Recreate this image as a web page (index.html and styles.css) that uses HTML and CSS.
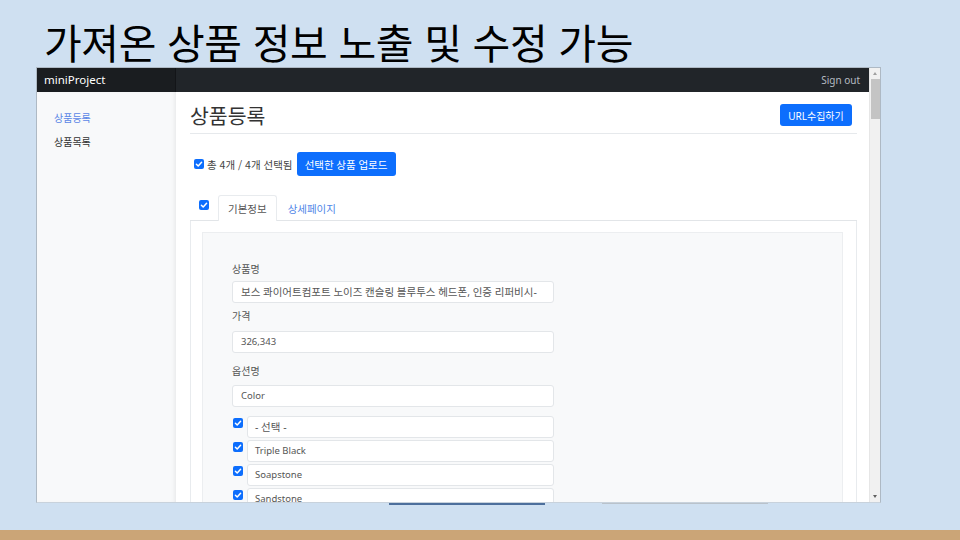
FILE: index.html
```html
<!DOCTYPE html>
<html lang="ko">
<head>
<meta charset="utf-8">
<link rel="stylesheet" href="styles.css">
</head>
<body>
<div class="slide">
  <h1 class="slide-title">가져온 상품 정보 노출 및 수정 가능</h1>
  <div class="frame">
    <div class="page">
      <header class="navbar">
        <div class="brand">miniProject</div>
        <div class="nav-fill"><span class="signout">Sign out</span></div>
      </header>
      <div class="body">
        <nav class="sidebar">
          <a class="side-link active">상품등록</a>
          <a class="side-link">상품목록</a>
        </nav>
        <main class="main">
          <div class="head">
            <h2 class="head-title">상품등록</h2>
            <button class="btn">URL수집하기</button>
          </div>
          <div class="upload-row">
            <span class="check"><svg viewBox="0 0 10 10"><path d="M2.4 5.2 4.2 7 7.6 3.2" fill="none" stroke="#fff" stroke-width="1.5" stroke-linecap="round" stroke-linejoin="round"/></svg></span>
            <span class="count">총 4개 / 4개 선택됨</span>
            <button class="btn btn-upload">선택한 상품 업로드</button>
          </div>
          <div class="tabs">
            <span class="check tab-check"><svg viewBox="0 0 10 10"><path d="M2.4 5.2 4.2 7 7.6 3.2" fill="none" stroke="#fff" stroke-width="1.5" stroke-linecap="round" stroke-linejoin="round"/></svg></span>
            <span class="tab active">기본정보</span>
            <span class="tab">상세페이지</span>
          </div>
          <div class="tab-box">
            <div class="card">
              <label class="lbl first">상품명</label>
              <div class="input ko">보스 콰이어트컴포트 노이즈 캔슬링 블루투스 헤드폰, 인증 리퍼비시-</div>
              <label class="lbl">가격</label>
              <div class="input">326,343</div>
              <label class="lbl third">옵션명</label>
              <div class="input">Color</div>
              <div class="options">
                <div class="opt"><span class="check"><svg viewBox="0 0 10 10"><path d="M2.4 5.2 4.2 7 7.6 3.2" fill="none" stroke="#fff" stroke-width="1.5" stroke-linecap="round" stroke-linejoin="round"/></svg></span><div class="input opt-input ko">- 선택 -</div></div>
                <div class="opt"><span class="check"><svg viewBox="0 0 10 10"><path d="M2.4 5.2 4.2 7 7.6 3.2" fill="none" stroke="#fff" stroke-width="1.5" stroke-linecap="round" stroke-linejoin="round"/></svg></span><div class="input opt-input">Triple Black</div></div>
                <div class="opt"><span class="check"><svg viewBox="0 0 10 10"><path d="M2.4 5.2 4.2 7 7.6 3.2" fill="none" stroke="#fff" stroke-width="1.5" stroke-linecap="round" stroke-linejoin="round"/></svg></span><div class="input opt-input">Soapstone</div></div>
                <div class="opt"><span class="check"><svg viewBox="0 0 10 10"><path d="M2.4 5.2 4.2 7 7.6 3.2" fill="none" stroke="#fff" stroke-width="1.5" stroke-linecap="round" stroke-linejoin="round"/></svg></span><div class="input opt-input">Sandstone</div></div>
              </div>
            </div>
          </div>
        </main>
      </div>
    </div>
    <div class="scrollbar">
      <span class="arrow up"></span>
      <span class="thumb"></span>
      <span class="track"></span>
      <span class="arrow down"></span>
    </div>
  </div>
  <div class="under">
    <span class="under-blue"></span>
    <span class="under-gray"></span>
  </div>
  <div class="spacer"></div>
  <div class="footer-bar"></div>
</div>
</body>
</html>
```
FILE: styles.css
```css
* { box-sizing: border-box; }
html, body { margin: 0; padding: 0; }
body {
  width: 960px;
  height: 540px;
  overflow: hidden;
  font-family: "Noto Sans", "Noto Sans CJK KR", sans-serif;
}
.slide {
  width: 960px;
  height: 540px;
  background: #cfe0f1;
  display: flex;
  flex-direction: column;
}
.slide-title {
  margin: 0 0 7px 44px;
  padding-top: 21px;
  height: 60px;
  font-family: "Noto Sans CJK KR", sans-serif;
  font-weight: 400;
  font-size: 41px;
  line-height: 41px;
  color: #000;
  letter-spacing: -0.4px;
  white-space: nowrap;
}
.frame {
  margin-left: 36px;
  width: 845px;
  height: 436px;
  display: flex;
  overflow: hidden;
  border: 1px solid #aeb9c4;
  border-bottom-color: #c8d2dc;
  background: #fff;
  flex-shrink: 0;
}
.page {
  flex: 1;
  display: flex;
  flex-direction: column;
  min-width: 0;
}
.navbar {
  height: 24px;
  display: flex;
  flex-shrink: 0;
  background: #212529;
}
.brand {
  width: 139px;
  background: #1a1d20;
  color: #fff;
  font-size: 11.5px;
  line-height: 24px;
  padding-left: 7px;
  box-shadow: inset -1px 0 0 rgba(0,0,0,.25);
}
.nav-fill {
  flex: 1;
  display: flex;
  justify-content: flex-end;
  align-items: center;
  padding-right: 9px;
}
.signout {
  color: #b5bbc1;
  font-size: 10px;
}
.body {
  flex: 1;
  display: flex;
  min-height: 0;
}
.sidebar {
  width: 139px;
  flex-shrink: 0;
  background: #f8f9fa;
  box-shadow: inset -3px 0 4px -2px rgba(0,0,0,.08);
  padding: 19px 0 0 17px;
  display: flex;
  flex-direction: column;
  gap: 10px;
}
.side-link {
  font-family: "Noto Sans CJK KR", sans-serif;
  font-size: 10px;
  line-height: 14px;
  color: #333;
}
.side-link.active { color: #5b87e6; }
.main {
  flex: 1;
  padding: 0 12px 0 14px;
  display: flex;
  flex-direction: column;
  min-width: 0;
}
.head {
  margin-top: 12px;
  padding-bottom: 7px;
  border-bottom: 1px solid #e6e9ec;
  display: flex;
  align-items: center;
  justify-content: space-between;
}
.head-title {
  margin: 0;
  font-family: "Noto Sans CJK KR", sans-serif;
  font-weight: 400;
  font-size: 20.5px;
  line-height: 22px;
  color: #333;
}
.btn {
  border: 0;
  background: #0d6efd;
  color: #fff;
  font-family: "Noto Sans", "Noto Sans CJK KR", sans-serif;
  font-size: 10px;
  height: 22px;
  width: 72px;
  padding: 0;
  border-radius: 3px;
  margin-right: 5px;
}
.upload-row {
  margin-top: 18px;
  display: flex;
  align-items: center;
  padding-left: 4px;
}
.count {
  font-family: "Noto Sans CJK KR", sans-serif;
  font-size: 10.5px;
  color: #444;
  margin-left: 3px;
}
.btn-upload {
  height: 24px;
  width: 99px;
  font-size: 10.5px;
  margin-left: 4px;
  margin-right: 0;
}
.check {
  width: 10px;
  height: 10px;
  border-radius: 2px;
  background: #0d6efd;
  display: inline-flex;
  flex-shrink: 0;
}
.check svg { width: 10px; height: 10px; }
.tabs {
  margin-top: 19px;
  height: 26px;
  display: flex;
  align-items: stretch;
  border-bottom: 1px solid #e2e5e8;
  padding-left: 9px;
}
.tab-check { margin-top: 5px; margin-right: 9px; }
.tab {
  font-family: "Noto Sans CJK KR", sans-serif;
  font-size: 10.5px;
  line-height: 25px;
  color: #4f86e8;
  padding: 0 10px;
  border: 1px solid transparent;
  border-bottom: 0;
  border-radius: 3px 3px 0 0;
}
.tab.active {
  color: #555;
  background: #fff;
  border-color: #e8ebee;
  margin-bottom: -1px;
  padding: 0 9px;
}
.tab-box {
  flex: 1;
  border: 1px solid #e8ebee;
  border-top: 0;
  padding: 11px 13px 0 11px;
  display: flex;
}
.card {
  flex: 1;
  background: #f8f9fa;
  border: 1px solid #eceef0;
  padding: 21px 0 0 29px;
  display: flex;
  flex-direction: column;
}
.lbl {
  font-family: "Noto Sans CJK KR", sans-serif;
  font-size: 10px;
  line-height: 14px;
  color: #555;
  margin: 6px 0 8px;
}
.lbl.first { margin-top: 8px; margin-bottom: 5px; }
.lbl.third { margin-top: 11px; margin-bottom: 7px; }
.input {
  width: 322px;
  height: 22px;
  background: #fff;
  border: 1px solid #e3e6e9;
  border-radius: 3px;
  font-family: "Noto Sans", "Noto Sans CJK KR", sans-serif;
  font-size: 9.5px;
  line-height: 20px;
  color: #555;
  padding-left: 8px;
  white-space: nowrap;
  overflow: hidden;
}
.input.ko { font-size: 10.5px; }
.options {
  margin-top: 9px;
  display: flex;
  flex-direction: column;
  gap: 2px;
}
.opt {
  display: flex;
  align-items: flex-start;
  gap: 4px;
  padding-left: 1px;
}
.opt .check { margin-top: 2px; }
.opt-input { width: 307px; padding-left: 7px; }
.scrollbar {
  width: 11px;
  flex-shrink: 0;
  background: #f1f1f1;
  border-left: 1px solid #e6e6e6;
  display: flex;
  flex-direction: column;
  align-items: center;
}
.arrow {
  width: 0;
  height: 0;
  border-left: 2.5px solid transparent;
  border-right: 2.5px solid transparent;
  margin: 4px 0;
}
.arrow.up { border-bottom: 3px solid #a0a0a0; }
.arrow.down { border-top: 3px solid #606060; }
.thumb {
  width: 9px;
  height: 40px;
  background: #c4c4c4;
}
.track { flex: 1; }
.under {
  display: flex;
  height: 2px;
  flex-shrink: 0;
}
.under-blue {
  margin-left: 389px;
  width: 156px;
  height: 2px;
  background: #4d6f9c;
}
.under-gray {
  margin-left: 57px;
  width: 166px;
  height: 1px;
  background: #b9c2cb;
}
.spacer { flex: 1; }
.footer-bar {
  height: 10px;
  background: #cba577;
  flex-shrink: 0;
}
```
